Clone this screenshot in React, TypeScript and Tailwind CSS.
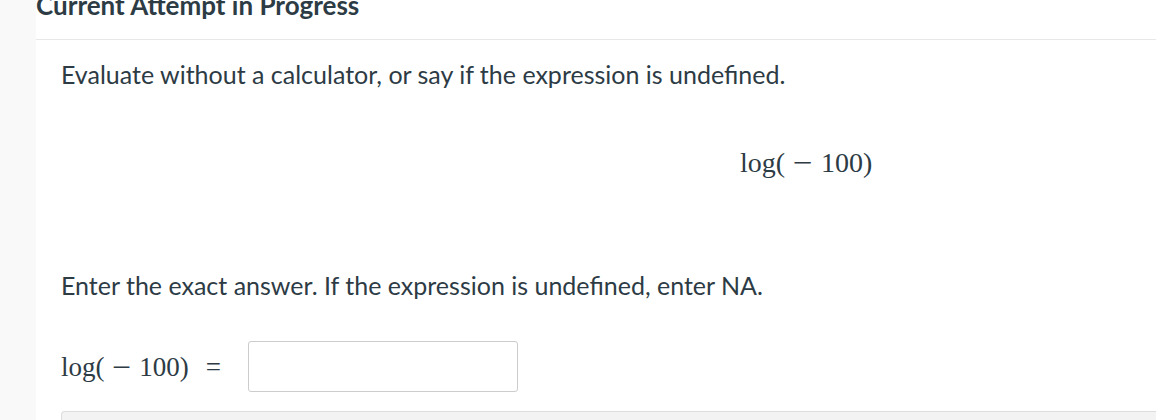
const mathFont = { fontFamily: '"Liberation Serif", "Times New Roman", serif' };

function LogExpr() {
  return (
    <span className="whitespace-nowrap" style={mathFont}>
      log( <span className="mx-[3px] inline-block scale-x-125">−</span> 100)
    </span>
  );
}

export default function App() {
  return (
    <div
      className="flex h-[420px] w-[1156px] overflow-hidden bg-white text-[#2d3b45]"
      style={{ fontFamily: 'Lato, "Noto Sans", sans-serif' }}
    >
      <div className="w-[36px] shrink-0 bg-[#f9f9f9]" />

      <div className="min-w-0 flex-1">
        <h1 className="-mt-[10px] h-[50px] border-b border-[#e8e8e8] text-[26px] leading-[30px] font-bold whitespace-nowrap">
          Current Attempt in Progress
        </h1>

        <div className="pl-[25px]">
          <p className="mt-[19px] text-[25px] leading-[30px] whitespace-nowrap">
            Evaluate without a calculator, or say if the expression is undefined.
          </p>

          <div className="mt-[57px] pl-[679px] text-[28px] leading-[30px]">
            <LogExpr />
          </div>

          <p className="mt-[92px] text-[25px] leading-[30px] whitespace-nowrap">
            Enter the exact answer. If the expression is undefined, enter NA.
          </p>

          <div className="mt-[41px] flex items-center">
            <div className="text-[27px] leading-[30px] whitespace-nowrap">
              <LogExpr /> <span className="ml-[10px]" style={mathFont}>=</span>
            </div>
            <input
              type="text"
              className="ml-[27px] h-[51px] w-[270px] rounded-[3px] border border-[#cccccc] bg-white"
            />
          </div>

          <div className="mt-[19px] h-[40px] rounded-tl-[4px] border-t border-l border-[#dddddd] bg-[#f3f3f3]" />
        </div>
      </div>
    </div>
  );
}
